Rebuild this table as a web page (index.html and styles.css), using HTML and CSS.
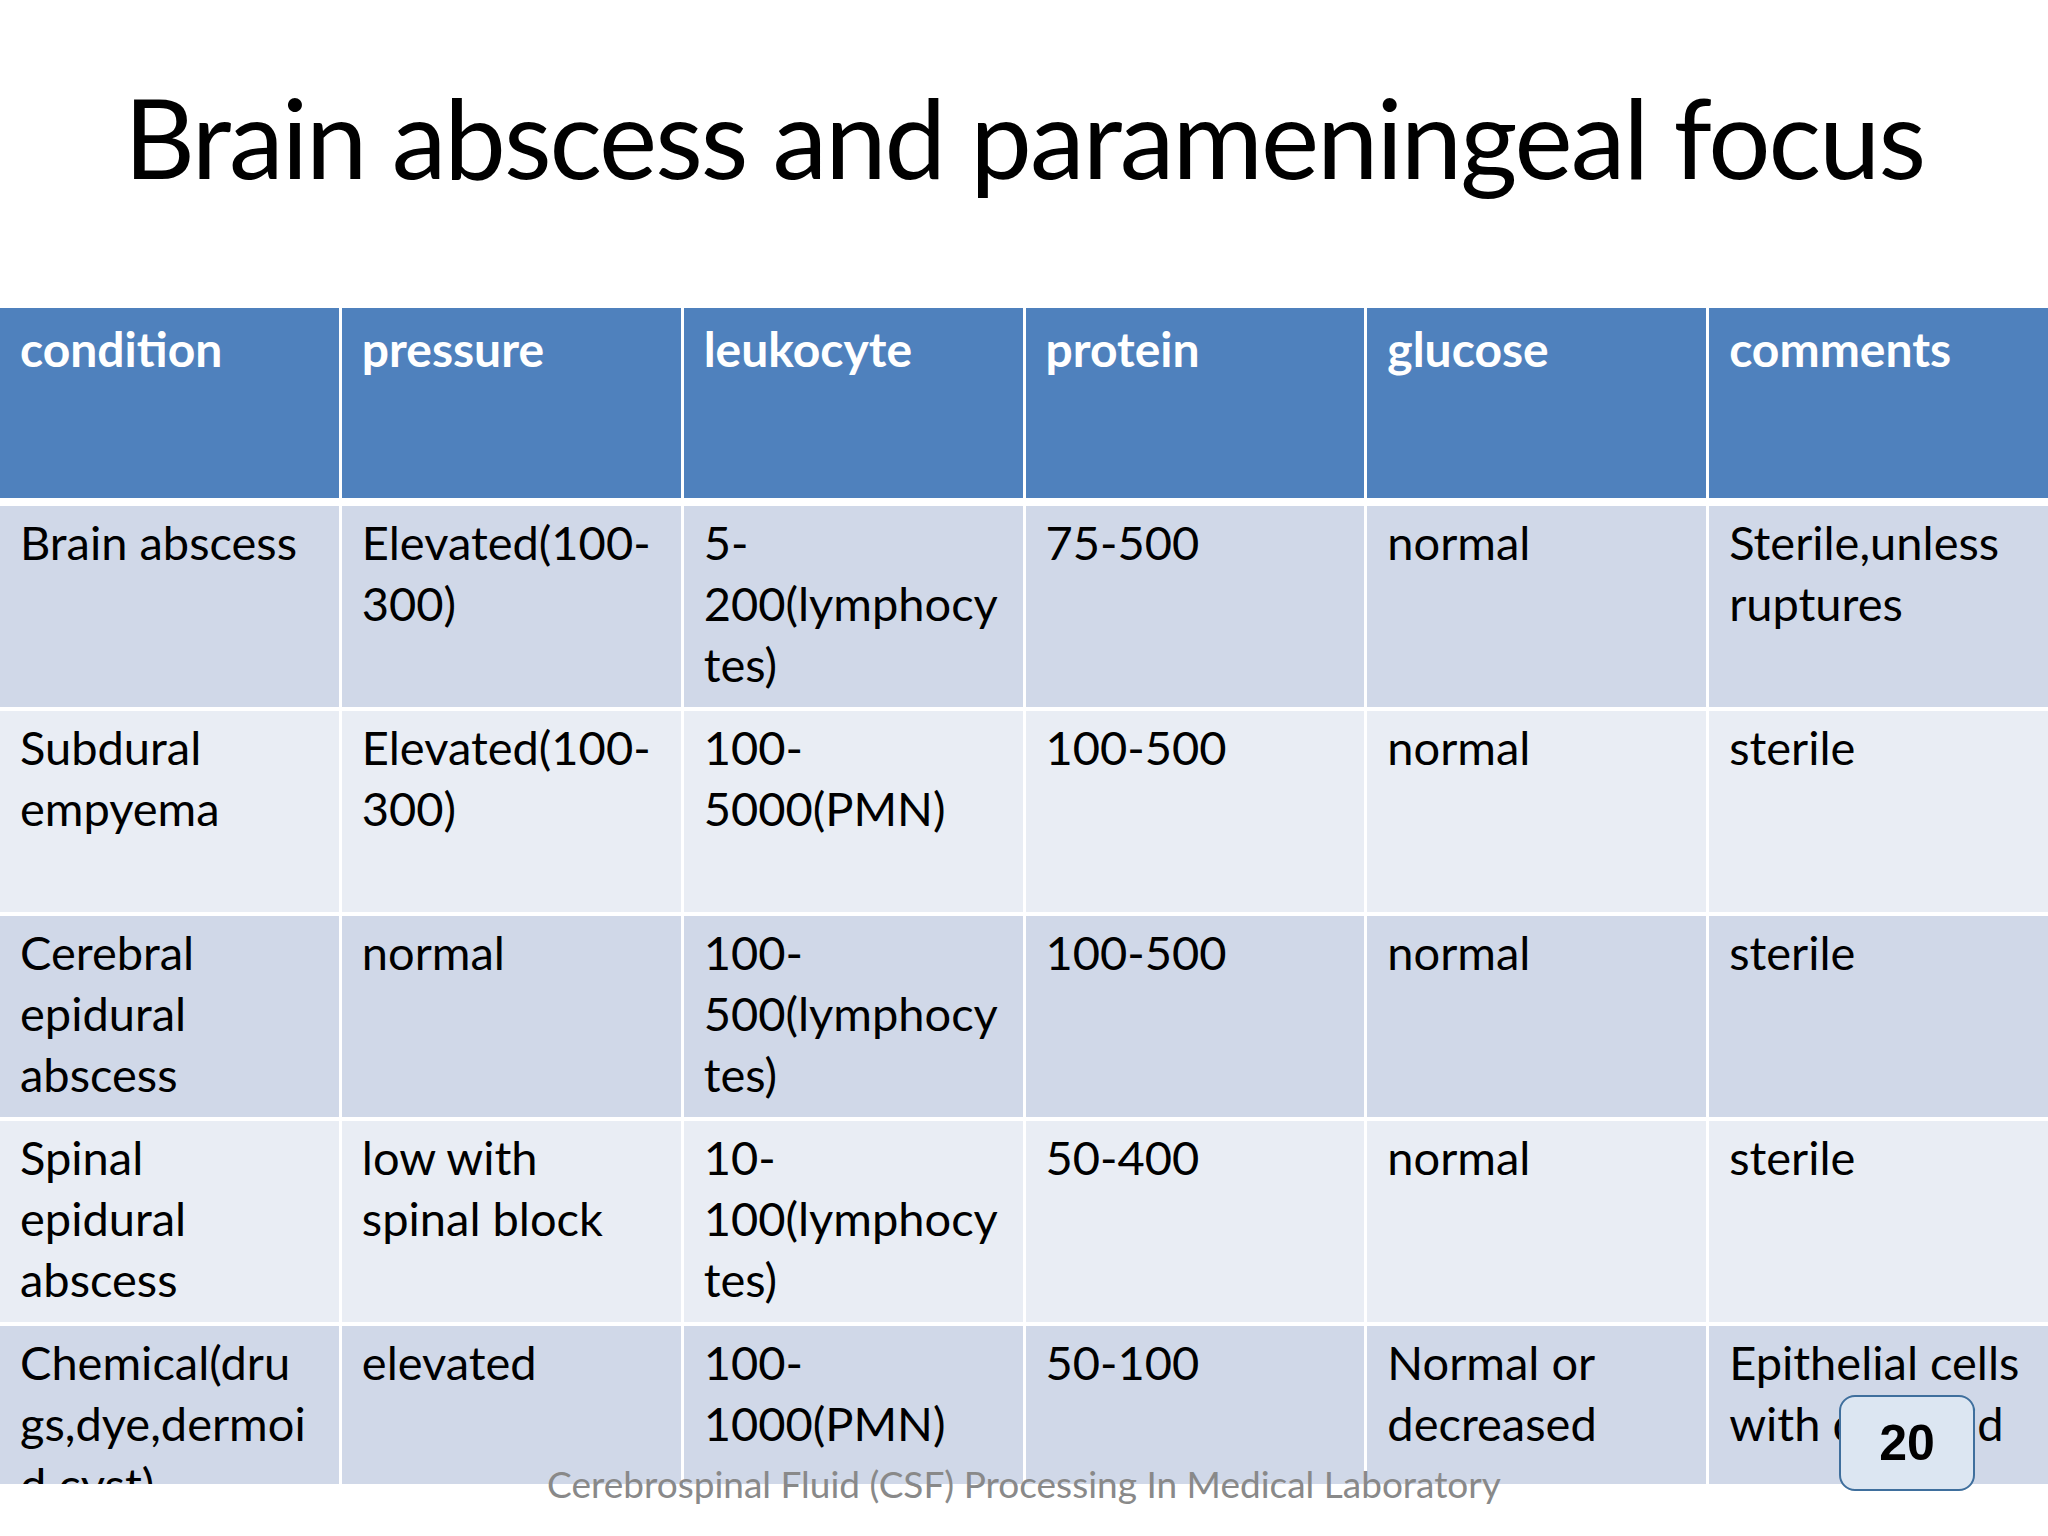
FILE: index.html
```html
<!DOCTYPE html>
<html lang="en">
<head>
<meta charset="utf-8">
<title>Brain abscess and parameningeal focus</title>
<link rel="stylesheet" href="styles.css">
</head>
<body>
<div class="slide">
  <h1 class="title">Brain abscess and parameningeal focus</h1>
  <div class="table-wrap">
    <div class="table">
      <div class="row head">
        <div class="cell">condition</div>
        <div class="cell">pressure</div>
        <div class="cell">leukocyte</div>
        <div class="cell">protein</div>
        <div class="cell">glucose</div>
        <div class="cell">comments</div>
      </div>
      <div class="row odd">
        <div class="cell">Brain abscess</div>
        <div class="cell">Elevated(100-<br>300)</div>
        <div class="cell">5-<br>200(lymphocy<br>tes)</div>
        <div class="cell">75-500</div>
        <div class="cell">normal</div>
        <div class="cell">Sterile,unless<br>ruptures</div>
      </div>
      <div class="row even">
        <div class="cell">Subdural<br>empyema</div>
        <div class="cell">Elevated(100-<br>300)</div>
        <div class="cell">100-<br>5000(PMN)</div>
        <div class="cell">100-500</div>
        <div class="cell">normal</div>
        <div class="cell">sterile</div>
      </div>
      <div class="row odd">
        <div class="cell">Cerebral<br>epidural<br>abscess</div>
        <div class="cell">normal</div>
        <div class="cell">100-<br>500(lymphocy<br>tes)</div>
        <div class="cell">100-500</div>
        <div class="cell">normal</div>
        <div class="cell">sterile</div>
      </div>
      <div class="row even">
        <div class="cell">Spinal<br>epidural<br>abscess</div>
        <div class="cell">low with<br>spinal block</div>
        <div class="cell">10-<br>100(lymphocy<br>tes)</div>
        <div class="cell">50-400</div>
        <div class="cell">normal</div>
        <div class="cell">sterile</div>
      </div>
      <div class="row odd">
        <div class="cell">Chemical(dru<br>gs,dye,dermoi<br>d cyst)</div>
        <div class="cell">elevated</div>
        <div class="cell">100-<br>1000(PMN)</div>
        <div class="cell">50-100</div>
        <div class="cell">Normal or<br>decreased</div>
        <div class="cell">Epithelial cells<br>with dermoid</div>
      </div>
    </div>
  </div>
  <div class="footer">Cerebrospinal Fluid (CSF) Processing In Medical Laboratory</div>
  <div class="page-num">20</div>
</div>
</body>
</html>
```

FILE: styles.css
```css
html, body {
  margin: 0;
  padding: 0;
  background: #ffffff;
}

.slide {
  position: relative;
  width: 2048px;
  height: 1536px;
  overflow: hidden;
  background: #ffffff;
  font-family: Lato, "Open Sans", sans-serif;
  color: #000000;
  display: flex;
  flex-direction: column;
}

.title {
  margin: 81px 0 0 0;
  height: 110px;
  font-size: 110px;
  line-height: 110px;
  font-weight: 400;
  text-align: center;
  white-space: nowrap;
  letter-spacing: -2px;
}

.table-wrap {
  margin-top: 117px;
  height: 1176px;
  overflow: hidden;
}

.table {
  display: flex;
  flex-direction: column;
  gap: 4px;
  background: #ffffff;
}

.row {
  display: grid;
  grid-template-columns: repeat(6, 1fr);
  column-gap: 3px;
  height: 201px;
}

.cell {
  padding: 6px 8px 0 20px;
  font-size: 47px;
  line-height: 61px;
  white-space: nowrap;
  overflow: hidden;
}

.head {
  height: 190px;
  margin-bottom: 4px;
}

.head .cell {
  background: #4f81bd;
  color: #ffffff;
  font-weight: 700;
  font-size: 48px;
  padding-top: 10px;
}

.odd .cell {
  background: #d0d8e8;
}

.even .cell {
  background: #e9edf4;
}

.footer {
  position: absolute;
  left: 0;
  top: 1465px;
  width: 100%;
  text-align: center;
  font-size: 37px;
  line-height: 37px;
  color: #898989;
  white-space: nowrap;
}

.page-num {
  position: absolute;
  left: 1839px;
  top: 1395px;
  width: 136px;
  height: 96px;
  box-sizing: border-box;
  border: 2.5px solid #3f6f9d;
  border-radius: 16px;
  background: #dce6f2;
  display: flex;
  align-items: center;
  justify-content: center;
  font-family: "Liberation Sans", Arial, sans-serif;
  font-weight: 700;
  font-size: 50px;
  color: #000000;
}
```
